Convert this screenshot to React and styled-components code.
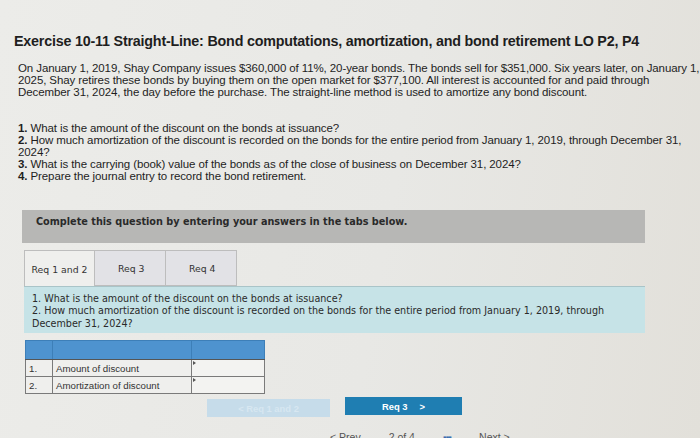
import React from "react";
import styled, { createGlobalStyle } from "styled-components";

const GlobalStyle = createGlobalStyle`
  html, body {
    margin: 0;
    padding: 0;
  }
  body {
    width: 700px;
    height: 438px;
    overflow: hidden;
    background: linear-gradient(100deg, #ecece9 0%, #e8e8e5 55%, #e2e0da 100%);
    color: #1e1e1e;
    font-family: "Liberation Sans", Arial, sans-serif;
  }
`;

const Page = styled.div`
  padding: 33px 0 0 0;
  height: 438px;
  box-sizing: border-box;
  overflow: hidden;
`;

const Title = styled.h1`
  margin: 0 0 0 14px;
  font-size: 14.3px;
  line-height: 16px;
  font-weight: 700;
  letter-spacing: -0.2px;
  white-space: nowrap;
`;

const Para = styled.div`
  margin: ${(p) => p.$top || 0}px 0 0 18px;
  font-size: 11.5px;
  line-height: 12px;
  letter-spacing: -0.1px;
  white-space: nowrap;
`;

const Line = styled.div``;

const Num = styled.b`
  font-weight: 700;
`;

const Notice = styled.div`
  margin: 28px 55px 0 22px;
  height: 33px;
  box-sizing: border-box;
  padding: 6px 0 0 14px;
  background: #b7b7b5;
  font-family: "DejaVu Sans", Verdana, sans-serif;
  font-weight: 700;
  font-size: 9.7px;
  line-height: 12px;
  color: #2a2a2a;
  white-space: nowrap;
`;

const Tabs = styled.div`
  display: flex;
  margin: 7px 0 0 24px;
  height: 36px;
`;

const Tab = styled.div`
  width: 71px;
  box-sizing: border-box;
  border: 1px solid #bdbdbd;
  border-bottom: ${(p) => (p.$active ? "none" : "1px solid #bdbdbd")};
  border-left: ${(p) => (p.$first ? "1px solid #bdbdbd" : "none")};
  background: ${(p) => (p.$active ? "#efefed" : "#e2e2e6")};
  font-family: "DejaVu Sans", Verdana, sans-serif;
  font-size: 9.3px;
  color: #333;
  display: flex;
  align-items: center;
  justify-content: ${(p) => (p.$active ? "center" : "flex-start")};
  padding-left: ${(p) => (p.$active ? 0 : 23)}px;
  padding-top: 1px;
  white-space: nowrap;
`;

const Prompt = styled.div`
  margin: 0 55px 0 24px;
  height: 47px;
  box-sizing: border-box;
  padding: 6px 0 0 8px;
  background: #c6e3e7;
  border-top: 1px solid #a9c4c8;
  font-family: "DejaVu Sans", Verdana, sans-serif;
  font-size: 9.6px;
  line-height: 12.4px;
  color: #2a2a2a;
  white-space: nowrap;
`;

const Table = styled.table`
  margin: 7px 0 0 25px;
  border-collapse: collapse;
  font-family: "Liberation Sans", Arial, sans-serif;
  font-size: 9.7px;
  color: #333;
`;

const Head = styled.th`
  background: #4e93cf;
  height: 18px;
  padding: 0;
  width: ${(p) => p.$w}px;
  border: 1px solid #3d7fb8;
  border-bottom: 1px solid #555;
`;

const Cell = styled.td`
  height: 16px;
  padding: 0 0 0 ${(p) => p.$pad || 3}px;
  border: 1px solid #7a7a7a;
  background: #efefed;
  white-space: nowrap;
`;

const InputCell = styled.td`
  height: 16px;
  padding: 0;
  border: 1px solid #7a7a7a;
  background: #f3f3f1;
  position: relative;
  &::before {
    content: "";
    position: absolute;
    left: 1px;
    top: 1px;
    border-left: 3px solid #555;
    border-top: 2px solid transparent;
    border-bottom: 2px solid transparent;
  }
`;

const Buttons = styled.div`
  display: flex;
  align-items: flex-start;
  margin: 3px 0 0 207px;
  gap: 15px;
`;

const NavButton = styled.div`
  width: ${(p) => p.$w}px;
  height: 18px;
  margin-top: ${(p) => p.$mt || 0}px;
  background: ${(p) => (p.$faded ? "#c6dcea" : "#1f7eb2")};
  color: ${(p) => (p.$faded ? "#d7e7f1" : "#ffffff")};
  font-family: "Liberation Sans", Arial, sans-serif;
  font-weight: 700;
  font-size: 9.4px;
  display: flex;
  align-items: center;
  justify-content: center;
  gap: 12px;
`;

const Pager = styled.div`
  display: flex;
  align-items: center;
  margin: 14px 0 0 330px;
  gap: 28px;
  font-family: "Liberation Sans", Arial, sans-serif;
  font-size: 10.5px;
  color: #555;
`;

const Grid = styled.span`
  color: #3b6fb0;
  font-weight: 700;
  letter-spacing: -1px;
`;

export default function App() {
  return (
    <>
      <GlobalStyle />
      <Page>
        <Title>
          Exercise 10-11 Straight-Line: Bond computations, amortization, and bond retirement LO P2, P4
        </Title>
        <Para $top={13}>
          <Line>
            On January 1, 2019, Shay Company issues $360,000 of 11%, 20-year bonds. The bonds sell for $351,000. Six years later, on January 1,
          </Line>
          <Line>
            2025, Shay retires these bonds by buying them on the open market for $377,100. All interest is accounted for and paid through
          </Line>
          <Line>
            December 31, 2024, the day before the purchase. The straight-line method is used to amortize any bond discount.
          </Line>
        </Para>
        <Para $top={24}>
          <Line><Num>1.</Num> What is the amount of the discount on the bonds at issuance?</Line>
          <Line>
            <Num>2.</Num> How much amortization of the discount is recorded on the bonds for the entire period from January 1, 2019, through December 31,
          </Line>
          <Line>2024?</Line>
          <Line><Num>3.</Num> What is the carrying (book) value of the bonds as of the close of business on December 31, 2024?</Line>
          <Line><Num>4.</Num> Prepare the journal entry to record the bond retirement.</Line>
        </Para>
        <Notice>Complete this question by entering your answers in the tabs below.</Notice>
        <Tabs>
          <Tab $active $first>Req 1 and 2</Tab>
          <Tab>Req 3</Tab>
          <Tab>Req 4</Tab>
        </Tabs>
        <Prompt>
          <Line>1. What is the amount of the discount on the bonds at issuance?</Line>
          <Line>
            2. How much amortization of the discount is recorded on the bonds for the entire period from January 1, 2019, through
          </Line>
          <Line>December 31, 2024?</Line>
        </Prompt>
        <Table>
          <thead>
            <tr>
              <Head $w={26} />
              <Head $w={138} />
              <Head $w={72} />
            </tr>
          </thead>
          <tbody>
            <tr>
              <Cell>1.</Cell>
              <Cell>Amount of discount</Cell>
              <InputCell />
            </tr>
            <tr>
              <Cell>2.</Cell>
              <Cell>Amortization of discount</Cell>
              <InputCell />
            </tr>
          </tbody>
        </Table>
        <Buttons>
          <NavButton $faded $w={123} $mt={2}>&lt; Req 1 and 2</NavButton>
          <NavButton $w={117}>
            <span>Req 3</span>
            <span>&gt;</span>
          </NavButton>
        </Buttons>
        <Pager>
          <span>&lt; Prev</span>
          <span>2 of 4</span>
          <Grid>▪▪▪</Grid>
          <span>Next &gt;</span>
        </Pager>
      </Page>
    </>
  );
}
